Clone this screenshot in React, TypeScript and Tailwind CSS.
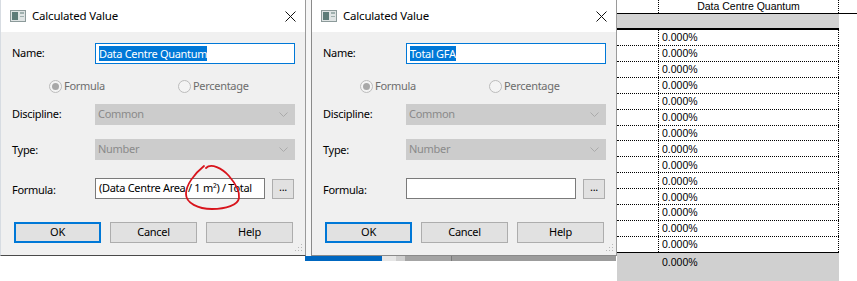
import React from "react";

const ROWS = 14;

function AppIcon() {
  return (
    <svg width="16" height="12" viewBox="0 0 16 12">
      <rect x="0.5" y="0.5" width="15" height="11" fill="#dfe4e4" stroke="#8c9a9a" />
      <rect x="2" y="2" width="6" height="8" fill="#5d7b78" />
      <rect x="10" y="2" width="4" height="2" fill="#9fb0ae" />
      <rect x="10" y="6" width="4" height="1" fill="#9fb0ae" />
    </svg>
  );
}

function Radio({ checked, label }: { checked?: boolean; label: string }) {
  return (
    <div className="flex items-center">
      <span className="flex h-[13px] w-[13px] items-center justify-center rounded-full border border-[#bcbcbc] bg-[#f4f4f4]">
        {checked && <span className="h-[7px] w-[7px] rounded-full bg-[#a8a8a8]" />}
      </span>
      <span className="ml-[2px] text-[#6d6d6d]">{label}</span>
    </div>
  );
}

function Select({ value }: { value: string }) {
  return (
    <div className="flex h-[21px] w-[200px] items-center justify-between bg-[#cccccc] pl-[3px] pr-[7px] text-[#8a8a8a]">
      <span>{value}</span>
      <svg width="9" height="6" viewBox="0 0 9 6">
        <path d="M0.5 0.5L4.5 4.5L8.5 0.5" fill="none" stroke="#aaaaaa" strokeWidth="1" />
      </svg>
    </div>
  );
}

function Button({ label, focused }: { label: string; focused?: boolean }) {
  return (
    <div
      className={`flex h-[21px] w-[87px] items-center justify-center bg-[#e1e1e1] text-black ${
        focused ? "border-2 border-[#0078d7]" : "border border-[#adadad]"
      }`}
    >
      {label}
    </div>
  );
}

function Dialog({
  name,
  formula,
  circled,
  edge,
}: {
  name: string;
  formula: string;
  circled?: boolean;
  edge: string;
}) {
  return (
    <div
      className={`relative flex h-[256px] w-[306px] shrink-0 flex-col border-x border-b bg-[#f0f0f0] font-['Noto_Sans',sans-serif] text-[11px] tracking-[-0.3px] text-black ${edge}`}
    >
      <div className="flex h-[32px] shrink-0 items-center bg-white pl-[9px] pr-[9px]">
        <AppIcon />
        <span className="ml-[6px] text-[11.5px] tracking-[-0.2px]">Calculated Value</span>
        <svg className="ml-auto" width="11" height="11" viewBox="0 0 11 11">
          <path d="M0.5 0.5L10.5 10.5M10.5 0.5L0.5 10.5" stroke="#111" strokeWidth="1" />
        </svg>
      </div>

      <div className="flex flex-col pl-[11px]">
        <div className="mt-[11px] flex h-[21px] items-center">
          <span className="w-[83px]">Name:</span>
          <div className="flex h-[21px] w-[200px] items-center border border-[#0078d7] bg-white pl-[3px]">
            <span className="bg-[#0078d7] leading-[15px] text-white">{name}</span>
          </div>
        </div>

        <div className="mt-[15px] flex h-[14px] items-center pl-[37px]">
          <div className="w-[129px]">
            <Radio checked label="Formula" />
          </div>
          <Radio label="Percentage" />
        </div>

        <div className="mt-[11px] flex h-[21px] items-center">
          <span className="w-[83px]">Discipline:</span>
          <Select value="Common" />
        </div>

        <div className="mt-[14px] flex h-[21px] items-center">
          <span className="w-[83px] pt-[2px]">Type:</span>
          <Select value="Number" />
        </div>

        <div className="mt-[18px] flex h-[21px] items-center">
          <span className="w-[83px] pt-[3px]">Formula:</span>
          <div className="flex h-[21px] w-[170px] items-center overflow-hidden whitespace-nowrap border border-[#7a7a7a] bg-white pl-[3px]">
            {formula}
          </div>
          <div className="ml-[7px] flex h-[20px] w-[22px] items-center justify-center border border-[#adadad] bg-[#e1e1e1] pb-[3px]">
            ...
          </div>
        </div>

        <div className="ml-[2px] mt-[23px] flex gap-[9px]">
          <Button label="OK" focused />
          <Button label="Cancel" />
          <Button label="Help" />
        </div>
      </div>

      <svg className="absolute bottom-[3px] right-[2px]" width="8" height="8" viewBox="0 0 8 8">
        <rect x="6" y="0" width="1" height="1" fill="#b8b8b8" />
        <rect x="3" y="3" width="1" height="1" fill="#b8b8b8" />
        <rect x="6" y="3" width="1" height="1" fill="#b8b8b8" />
        <rect x="0" y="6" width="1" height="1" fill="#b8b8b8" />
        <rect x="3" y="6" width="1" height="1" fill="#b8b8b8" />
        <rect x="6" y="6" width="1" height="1" fill="#b8b8b8" />
      </svg>

      {circled && (
        <svg className="pointer-events-none absolute left-[-1px] top-0" width="306" height="256" viewBox="0 0 306 256">
          <path
            d="M206 168 C 211 163, 222 168, 229 176 C 235 183, 240 192, 239 198 C 238 205, 226 209, 212 209 C 198 209, 186 203, 186 194 C 186 185, 194 174, 204 166"
            fill="none"
            stroke="#d8141c"
            strokeWidth="1.8"
            strokeLinecap="round"
          />
        </svg>
      )}
    </div>
  );
}

function Sheet() {
  return (
    <div className="flex w-[240px] flex-col font-['Liberation_Sans',Arial,sans-serif] text-[10.5px] text-black">
      <div className="flex h-[14px] border-b border-black">
        <div className="w-[42px] border-r border-dotted border-black" />
        <div className="flex w-[180px] items-center justify-center border-r border-dotted border-black leading-none">
          Data Centre Quantum
        </div>
      </div>
      <div className="h-[16px] w-[222px] border-b-2 border-black bg-[#d3d3d3]" />
      {Array.from({ length: ROWS }).map((_, i) => (
        <div
          key={i}
          className={`flex h-[16px] w-[222px] border-b ${
            i === ROWS - 1 ? "border-solid border-black" : "border-dotted border-black"
          }`}
        >
          <div className="w-[42px] border-r border-dotted border-black" />
          <div className="flex w-[180px] items-center border-r border-dotted border-black pl-[3px] leading-none">
            0.000%
          </div>
        </div>
      ))}
      <div className="flex h-[28px] w-[222px] bg-[#d0d0d0] pl-[45px] pt-[2px]">0.000%</div>
    </div>
  );
}

export default function App() {
  return (
    <div className="flex h-[281px] w-[857px] overflow-hidden bg-white">
      <div className="flex w-[617px] shrink-0 flex-col">
        <div className="flex h-[256px]">
          <Dialog
            name="Data Centre Quantum"
            formula="(Data Centre Area / 1 m²) / Total"
            circled
            edge="border-l-[#d7dce2] border-r-[#9a9a9a] border-b-[#4a4a4a]"
          />
          <div className="w-[5px] shrink-0 bg-[#f6f6f6]" />
          <Dialog
            name="Total GFA"
            formula=""
            edge="border-l-[#8a8a8a] border-r-[#9a9a9a] border-b-[#8a8a8a]"
          />
        </div>
        <div className="flex h-[5px]">
          <div className="w-[305px]" />
          <div className="w-[77px] bg-[#0067c0]" />
          <div className="w-[14px] bg-[#e6e6e6]" />
          <div className="w-[9px] bg-[#cfcfcf]" />
          <div className="w-[47px] border-r border-[#7a7a7a] bg-[#a4a4a4]" />
          <div className="w-[164px] bg-[#9c9c9c]" />
        </div>
      </div>
      <Sheet />
    </div>
  );
}
